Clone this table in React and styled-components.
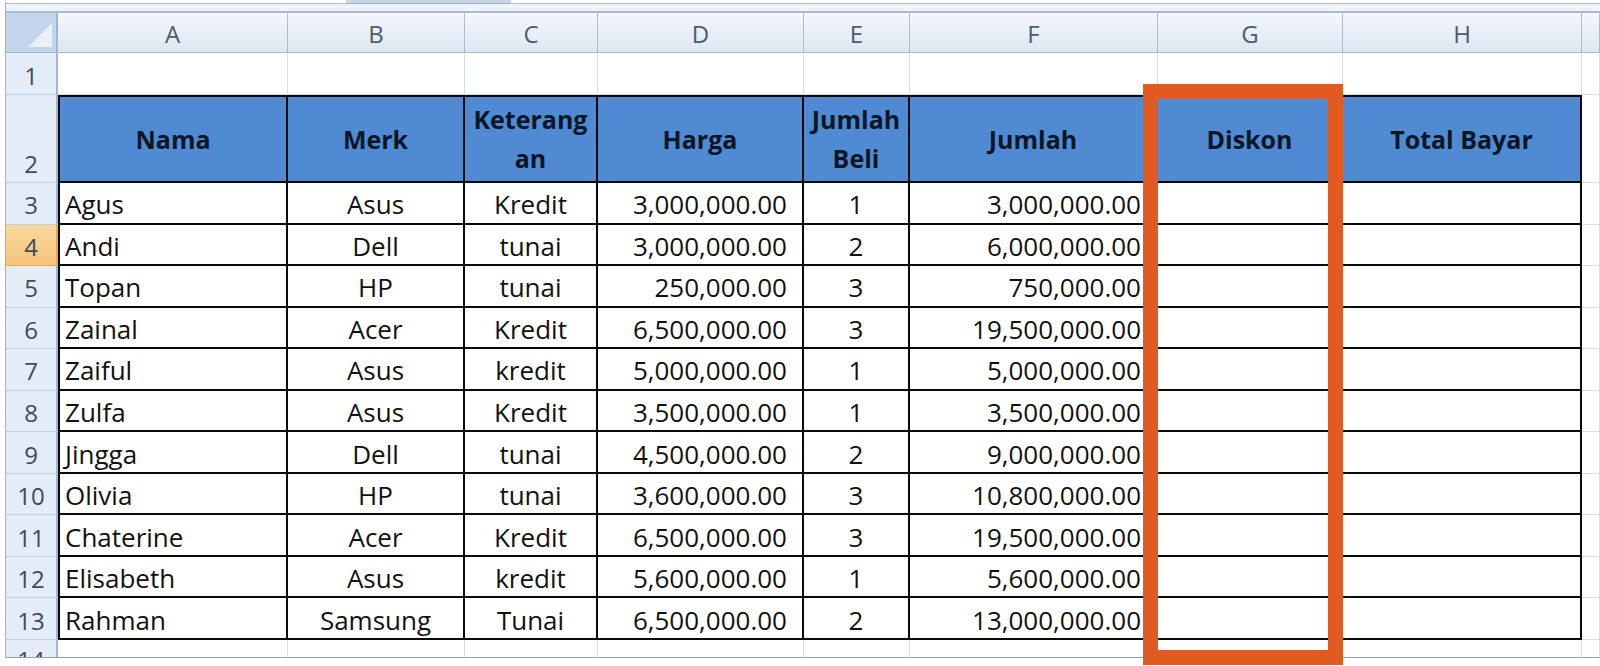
import styled, { createGlobalStyle } from 'styled-components';

const GlobalStyle = createGlobalStyle`
  html, body {
    margin: 0;
    padding: 0;
    background: #ffffff;
  }
  body {
    font-family: "Open Sans", "Liberation Sans", sans-serif;
  }
`;

const COLS = ['A', 'B', 'C', 'D', 'E', 'F', 'G', 'H', ''];

const HEADERS = [
  ['Nama'],
  ['Merk'],
  ['Keterang', 'an'],
  ['Harga'],
  ['Jumlah', 'Beli'],
  ['Jumlah'],
  ['Diskon'],
  ['Total Bayar'],
];

const ROWS = [
  ['Agus', 'Asus', 'Kredit', '3,000,000.00', '1', '3,000,000.00'],
  ['Andi', 'Dell', 'tunai', '3,000,000.00', '2', '6,000,000.00'],
  ['Topan', 'HP', 'tunai', '250,000.00', '3', '750,000.00'],
  ['Zainal', 'Acer', 'Kredit', '6,500,000.00', '3', '19,500,000.00'],
  ['Zaiful', 'Asus', 'kredit', '5,000,000.00', '1', '5,000,000.00'],
  ['Zulfa', 'Asus', 'Kredit', '3,500,000.00', '1', '3,500,000.00'],
  ['Jingga', 'Dell', 'tunai', '4,500,000.00', '2', '9,000,000.00'],
  ['Olivia', 'HP', 'tunai', '3,600,000.00', '3', '10,800,000.00'],
  ['Chaterine', 'Acer', 'Kredit', '6,500,000.00', '3', '19,500,000.00'],
  ['Elisabeth', 'Asus', 'kredit', '5,600,000.00', '1', '5,600,000.00'],
  ['Rahman', 'Samsung', 'Tunai', '6,500,000.00', '2', '13,000,000.00'],
];

// alignment per table column
const ALIGN = ['left', 'center', 'center', 'right', 'center', 'right', 'left', 'left'];

const Screen = styled.div`
  position: relative;
  width: 1600px;
  height: 666px;
  overflow: hidden;
  background: #ffffff;
`;

const TopBar = styled.div`
  height: 13px;
  margin-left: 5px;
  box-sizing: border-box;
  border-left: 1px solid #a7b1bd;
  border-top: 3px solid #ffffff;
  border-bottom: 2px solid #a9bcd3;
  background: #eef3f9;
  display: flex;
  align-items: flex-start;
  box-shadow: inset 0 1px 0 #b3bcc8;
`;

const Thumb = styled.div`
  margin-left: 340px;
  width: 165px;
  height: 3px;
  margin-top: -3px;
  background: #c9d6e6;
  border-bottom: 1px solid #9fb2c9;
`;

const Window = styled.div`
  margin-left: 5px;
  height: 645px;
  box-sizing: border-box;
  border-left: 1px solid #a7b1bd;
  border-bottom: 1px solid #9a9fa6;
  overflow: hidden;
`;

const Sheet = styled.div`
  display: grid;
  grid-template-columns: 52px 230px 177px 133px 206px 106px 248px 185px 239px 1fr;
  grid-template-rows: 40px 42px 88px repeat(11, 41.55px) 1fr;
  height: 100%;
`;

const Corner = styled.div`
  position: relative;
  box-sizing: border-box;
  background: #c4d5eb;
  border-right: 2px solid #9fb6d0;
  border-bottom: 1px solid #9fb6d0;
  overflow: hidden;

  &::after {
    content: '';
    position: absolute;
    right: 4px;
    bottom: 5px;
    width: 0;
    height: 0;
    border-left: 24px solid transparent;
    border-bottom: 24px solid #eaf0f8;
  }
`;

const ColHead = styled.div`
  box-sizing: border-box;
  display: flex;
  align-items: center;
  justify-content: center;
  background: linear-gradient(#f4f7fb, #e9eff7 50%, #dde6f1);
  border-right: 1px solid #a9bdd4;
  border-bottom: 1px solid #9fb6d0;
  color: #4b5b70;
  font-size: 24px;
  padding-top: 2px;
`;

const RowHead = styled.div`
  box-sizing: border-box;
  display: flex;
  align-items: ${p => (p.$bottom ? 'flex-end' : 'center')};
  justify-content: center;
  padding-top: 3px;
  padding-bottom: ${p => (p.$bottom ? '2px' : '0')};
  background: ${p => (p.$active ? 'linear-gradient(#f9d99f, #f6c37c)' : '#e4ecf7')};
  border-right: 2px solid ${p => (p.$active ? '#f0a83c' : '#9fb6d0')};
  border-bottom: 1px solid ${p => (p.$active ? '#f0a83c' : '#c3d1e3')};
  color: #3d4b5c;
  font-size: 24px;
`;

const Cell = styled.div`
  box-sizing: border-box;
  display: flex;
  align-items: center;
  justify-content: ${p =>
    p.$align === 'right' ? 'flex-end' : p.$align === 'center' ? 'center' : 'flex-start'};
  padding: ${p => (p.$align === 'right' ? '3px 15px 0 6px' : '3px 5px 0 5px')};
  font-size: 26px;
  color: #111111;
  white-space: nowrap;
  background: #ffffff;
  border-right: ${p => (p.$table ? '2px solid #0a0a0a' : '1px solid #d6dde8')};
  border-bottom: ${p => (p.$table ? '2px solid #0a0a0a' : '1px solid #d6dde8')};
  border-left: ${p => (p.$first ? '2px solid #0a0a0a' : 'none')};
`;

const HeadCell = styled(Cell)`
  background: #4f8ad3;
  border-top: 2px solid #0a0a0a;
  font-weight: 700;
  font-size: 25px;
  color: #0c1624;
  text-align: center;
  line-height: 39px;
  padding: 0 2px;
`;

const Highlight = styled.div`
  position: absolute;
  left: 1143px;
  top: 84px;
  width: 200px;
  height: 581px;
  box-sizing: border-box;
  border: 15px solid #e15a21;
  pointer-events: none;
`;

function App() {
  return (
    <Screen>
      <GlobalStyle />
      <TopBar>
        <Thumb />
      </TopBar>
      <Window>
        <Sheet>
          <Corner />
          {COLS.map((c, i) => (
            <ColHead key={`h${i}`}>{c}</ColHead>
          ))}

          <RowHead $bottom>1</RowHead>
          {COLS.map((c, i) => (
            <Cell key={`r1${i}`} />
          ))}

          <RowHead $bottom>2</RowHead>
          {HEADERS.map((lines, i) => (
            <HeadCell key={`hd${i}`} $table $first={i === 0} $align="center">
              <div>
                {lines.map((l, j) => (
                  <div key={j}>{l}</div>
                ))}
              </div>
            </HeadCell>
          ))}
          <Cell />

          {ROWS.map((row, r) => (
            <>
              <RowHead key={`rh${r}`} $active={r === 1}>{r + 3}</RowHead>
              {ALIGN.map((a, i) => (
                <Cell key={`c${r}-${i}`} $table $first={i === 0} $align={a}>
                  {row[i] || ''}
                </Cell>
              ))}
              <Cell key={`x${r}`} />
            </>
          ))}

          <RowHead $bottom>14</RowHead>
          {COLS.map((c, i) => (
            <Cell key={`r14${i}`} />
          ))}
        </Sheet>
      </Window>
      <Highlight />
    </Screen>
  );
}

export default App;
